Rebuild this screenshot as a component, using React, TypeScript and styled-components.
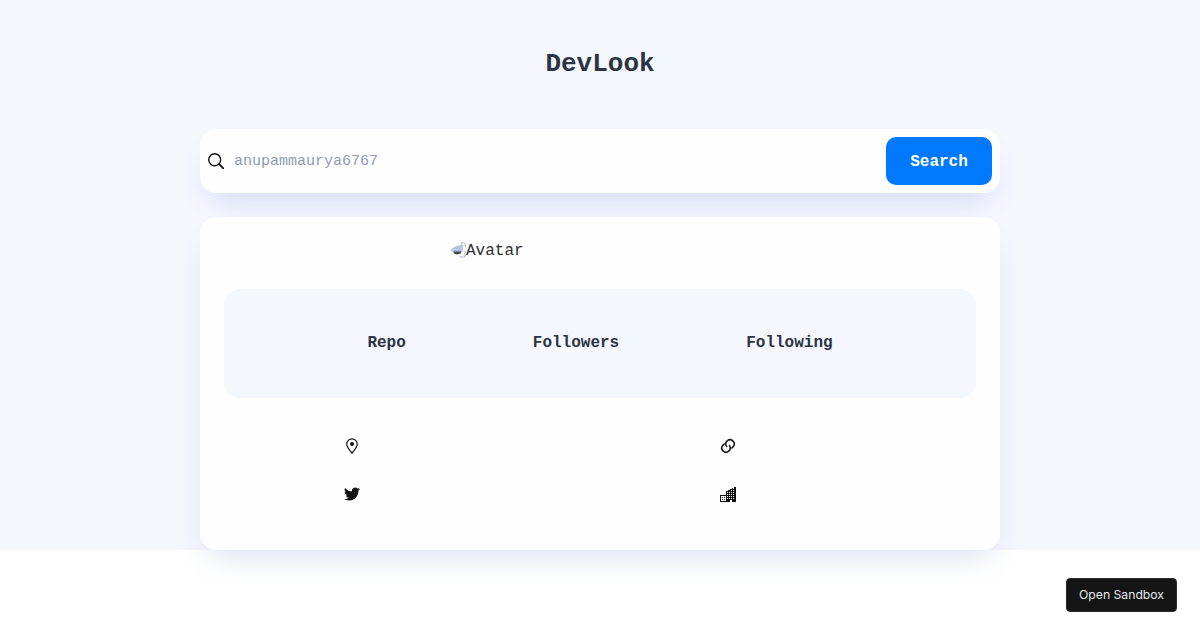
import React from "react";
import styled, { createGlobalStyle } from "styled-components";

const Global = createGlobalStyle`
  html, body { margin: 0; padding: 0; background: #fff; }
  html, body, #root { min-height: 100%; height: 100%; }
  body { font-family: "Liberation Mono", monospace; }
`;

const Page = styled.main`
  height: 550px;
  background: #f5f7ff;
  display: flex;
  flex-direction: column;
  align-items: center;
`;

const Title = styled.h1`
  margin: 49px 0 49px;
  height: 31px;
  font: 700 26px/31px "Liberation Mono", monospace;
  color: #2b3442;
`;

const Column = styled.div`
  position: relative;
  z-index: 1;
  width: 800px;
  display: flex;
  flex-direction: column;
  gap: 24px;
`;

const SearchBar = styled.form`
  height: 64px;
  box-sizing: border-box;
  padding: 8px;
  background: #fefefe;
  border-radius: 16px;
  box-shadow: 0 16px 30px -10px rgba(70, 96, 187, 0.2);
  display: flex;
  align-items: center;
  gap: 10px;
`;

const SearchInput = styled.input`
  flex: 1;
  min-width: 0;
  border: 0;
  outline: 0;
  padding: 2px 0 0;
  background: transparent;
  font: 400 15px/18px "Liberation Mono", monospace;
  color: #2b3442;
  &::placeholder { color: #8c9cb4; opacity: 1; }
`;

const SearchButton = styled.button`
  width: 106px;
  height: 48px;
  border: 0;
  border-radius: 10px;
  padding: 2px 0 0;
  background: #0079ff;
  color: #fff;
  font: 700 16px/18px "Liberation Mono", monospace;
`;

const Card = styled.section`
  height: 333px;
  box-sizing: border-box;
  padding: 24px;
  background: #fefefe;
  border-radius: 16px;
  box-shadow: 0 16px 30px -10px rgba(70, 96, 187, 0.2);
`;

const AvatarRow = styled.div`
  height: 18px;
  padding-left: 226px;
  display: flex;
  align-items: center;
  font: 400 16px/18px "Liberation Mono", monospace;
  color: #2a2d33;
`;

const AvatarLabel = styled.span`
  padding-top: 2px;
`;

const Stats = styled.div`
  margin-top: 30px;
  height: 109px;
  box-sizing: border-box;
  padding-top: 45px;
  background: #f5f7ff;
  border-radius: 16px;
  display: flex;
  justify-content: center;
  align-items: flex-start;
  gap: 127px;
`;

const StatLabel = styled.span`
  font: 700 16px/18px "Liberation Mono", monospace;
  color: #2b3442;
`;

const Links = styled.ul`
  list-style: none;
  margin: 36px 0 0;
  padding: 0;
  display: grid;
  grid-template-columns: 1fr 1fr;
  grid-auto-rows: 24px;
  row-gap: 24px;
`;

const LinkItem = styled.li`
  padding-left: 120px;
  display: flex;
  align-items: center;
`;

const SandboxButton = styled.button`
  position: fixed;
  left: 1066px;
  top: 578px;
  z-index: 2;
  width: 111px;
  height: 34px;
  box-sizing: border-box;
  border: 1px solid #2a2d35;
  border-radius: 4px;
  background: #151515;
  color: #e6e8ee;
  padding: 0;
  font: 400 12.2px/16px Inter, sans-serif;
`;

const Icon = styled.svg`
  width: 16px;
  height: 16px;
  flex: none;
  display: block;
`;

const SearchIcon = () => (
  <Icon viewBox="0 0 16 16" fill="none" stroke="#111" strokeWidth="1.4" strokeLinecap="round">
    <circle cx="6.700" cy="6.700" r="6" />
    <path d="M11.200 11.200 15.300 15.300" strokeWidth="1.800" />
  </Icon>
);

const BrokenImage = () => (
  <Icon viewBox="0 0 16 16">
    <path d="M.3 8.500C2.500 5.500 6 3.500 9.500 3.500l2.500-1.500 1 3-.5 4.500-4 2.500-3.500-.5z" fill="#b4c4e0" />
    <path d="M3.500 9.500h8l-1 2-3.500 1-3-1z" fill="#3f444d" />
    <path d="M11 .5h2.500l2 2.500v2.500" fill="none" stroke="#a5abb5" strokeWidth=".8" />
    <path d="M12 .5v3h3.500" fill="none" stroke="#c3c7ce" strokeWidth=".7" />
    <path d="M15 9v6h-4.500l-1-1" fill="none" stroke="#8fa3c7" strokeWidth=".8" />
  </Icon>
);

const LocationIcon = () => (
  <Icon viewBox="0 0 16 16" fill="none">
    <path d="M8 15.200C5.500 12.200 2.700 9 2.700 6.100a5.300 5.300 0 0 1 10.600 0C13.300 9 10.500 12.200 8 15.200z" stroke="#111" strokeWidth="1.200" strokeLinejoin="round" />
    <circle cx="8" cy="6" r="2" fill="#111" />
  </Icon>
);

const WebsiteIcon = () => (
  <Icon viewBox="0 0 16 16" fill="none" stroke="#1a1a1a" strokeWidth="1.600" strokeLinecap="round">
    <path d="M6.560 8.410A4.200 4.200 0 1 1 13.440 8.410L11.800 10" />
    <path d="M9.440 7.590A4.200 4.200 0 1 1 2.560 7.590L4.200 6" />
  </Icon>
);

const TwitterIcon = () => (
  <Icon viewBox="0 0 24 24">
    <path
      fill="#111"
      d="M23.950 4.570a10 10 0 0 1-2.820.77 4.960 4.960 0 0 0 2.160-2.720c-.95.550-2 .96-3.130 1.190a4.920 4.920 0 0 0-8.380 4.480C7.690 8.090 4.070 6.130 1.640 3.160a4.820 4.820 0 0 0-.67 2.480c0 1.710.87 3.210 2.190 4.090a4.900 4.900 0 0 1-2.230-.62v.060a4.920 4.920 0 0 0 3.950 4.830 5 5 0 0 1-2.210.080 4.940 4.940 0 0 0 4.600 3.420A9.870 9.870 0 0 1 0 19.540a14 14 0 0 0 7.560 2.210c9.050 0 14-7.500 14-13.980 0-.21 0-.42-.02-.63A9.940 9.940 0 0 0 24 4.590z"
    />
  </Icon>
);

const CompanyIcon = () => (
  <Icon viewBox="0 0 16 16" shapeRendering="crispEdges">
    <path fill="#111" d="M16 0v16H6V5h2V4h2V3h2V2h2V1h2z" />
    <path fill="#fff" d="M7 6h1v1H7zM9 6h1v1H9zM11 6h1v1h-1zM13 6h1v1h-1zM11 4h1v1h-1zM13 4h1v1h-1zM13 2h1v1h-1zM7 8h1v1H7zM9 8h1v1H9zM11 8h1v1h-1zM13 8h1v1h-1zM7 10h1v1H7zM9 10h1v1H9zM11 10h1v1h-1zM13 10h1v1h-1zM7 12h1v1H7zM9 12h1v1H9zM11 12h1v1h-1zM13 12h1v1h-1zM10 14h2v2h-2z" />
    <path fill="#111" d="M0 9h6v1H1v5h5v1H0zM2 11h1v1H2zM4 11h1v1H4zM2 13h1v1H2zM4 13h1v1H4z" />
  </Icon>
);

export default function App() {
  return (
    <>
      <Global />
      <Page>
        <Title>DevLook</Title>
        <Column>
          <SearchBar onSubmit={(e) => e.preventDefault()}>
            <SearchIcon />
            <SearchInput placeholder="anupammaurya6767" />
            <SearchButton type="submit">Search</SearchButton>
          </SearchBar>
          <Card>
            <AvatarRow>
              <BrokenImage />
              <AvatarLabel>Avatar</AvatarLabel>
            </AvatarRow>
            <Stats>
              <StatLabel>Repo</StatLabel>
              <StatLabel>Followers</StatLabel>
              <StatLabel>Following</StatLabel>
            </Stats>
            <Links>
              <LinkItem><LocationIcon /></LinkItem>
              <LinkItem><WebsiteIcon /></LinkItem>
              <LinkItem><TwitterIcon /></LinkItem>
              <LinkItem><CompanyIcon /></LinkItem>
            </Links>
          </Card>
        </Column>
      </Page>
      <SandboxButton type="button">Open Sandbox</SandboxButton>
    </>
  );
}
